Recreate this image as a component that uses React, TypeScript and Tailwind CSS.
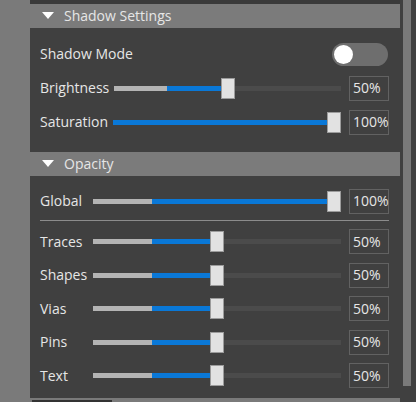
import React from "react";

const FONT = { fontFamily: '"Open Sans", "Noto Sans", sans-serif' };

function Header({ title }: { title: string }) {
  return (
    <div className="h-[24px] bg-[#7b7b7b] flex items-center pl-[12px]">
      <svg width="12" height="8" viewBox="0 0 12 8" className="mr-[10px]">
        <polygon points="0,0 12,0 6,7" fill="#ffffff" />
      </svg>
      <span className="text-[14px] text-[#e6e6e6] leading-none">{title}</span>
    </div>
  );
}

function Slider({
  width,
  value,
  gray,
}: {
  width: number;
  value: number;
  gray: number;
}) {
  const thumbLeft = value * (width - 14);
  return (
    <div className="relative h-[21px] flex items-center" style={{ width }}>
      <div className="absolute left-0 right-0 h-[5px] bg-[#4b4b4b]" />
      <div
        className="absolute left-0 h-[5px] bg-[#0a78d7]"
        style={{ width: thumbLeft + 7 }}
      />
      <div className="absolute left-0 h-[5px] bg-[#b4b4b4]" style={{ width: gray }} />
      <div
        className="absolute top-0 h-[21px] w-[14px] bg-[#e2e2e2] border border-[#9c9c9c]"
        style={{ left: thumbLeft }}
      />
    </div>
  );
}

function ValueBox({ v }: { v: string }) {
  return (
    <div className="w-[40px] h-[25px] border border-[#626262] flex items-center pl-[3px] text-[14px] text-[#e6e6e6] leading-none">
      {v}
    </div>
  );
}

function Row({
  label,
  labelW,
  sliderW,
  value,
  gray,
  text,
  h = "h-[34px]",
}: {
  label: string;
  labelW: string;
  sliderW: number;
  value: number;
  gray: number;
  text: string;
  h?: string;
}) {
  return (
    <div className={`${h} flex items-center pl-[10px]`}>
      <div className={`${labelW} text-[14px] text-[#e6e6e6] leading-none`}>{label}</div>
      <Slider width={sliderW} value={value} gray={gray} />
      <div className="ml-[8px]">
        <ValueBox v={text} />
      </div>
    </div>
  );
}

export default function App() {
  return (
    <div className="w-[416px] h-[402px] bg-[#404040] flex overflow-hidden" style={FONT}>
      <div className="w-[30px] h-full bg-[#7a7a7a]" />
      <div className="w-[370px] flex flex-col">
        <div className="h-[4px] bg-[#3a3a3a]" />
        <Header title="Shadow Settings" />
        <div className="h-[124px] bg-[#404040] pt-[9px]">
          <div className="h-[34px] flex items-center pl-[10px] pr-[12px] justify-between">
            <span className="text-[14px] text-[#e6e6e6] leading-none">Shadow Mode</span>
            <div className="w-[56px] h-[23px] rounded-full bg-[#6e6e6e] flex items-center pl-[2px]">
              <div className="w-[19px] h-[19px] rounded-full bg-white" />
            </div>
          </div>
          <Row label="Brightness" labelW="w-[74px]" sliderW={227} value={0.5} gray={53} text="50%" />
          <Row label="Saturation" labelW="w-[73px]" sliderW={228} value={1} gray={0} text="100%" />
        </div>
        <Header title="Opacity" />
        <div className="h-[222px] bg-[#404040] pt-[8px]">
          <Row label="Global" labelW="w-[53px]" sliderW={248} value={1} gray={59} text="100%" />
          <div className="ml-[10px] mr-[11px] mt-[2px] h-[1px] bg-[#8c8c8c]" />
          <div className="pt-[4px]">
            {["Traces", "Shapes", "Vias", "Pins", "Text"].map((l) => (
              <Row
                key={l}
                label={l}
                labelW="w-[53px]"
                sliderW={248}
                value={0.5}
                gray={59}
                text="50%"
                h="h-[33.5px]"
              />
            ))}
          </div>
        </div>
        <div className="h-[2px] bg-[#7a7a7a]" />
        <div className="h-[2px] bg-[#7a7a7a] flex">
          <div className="ml-[2px] w-[80px] bg-[#333333]" />
        </div>
      </div>
      <div className="w-[3px]" />
      <div className="w-[8px] h-[386px] bg-[#7a7a7a]" />
    </div>
  );
}
